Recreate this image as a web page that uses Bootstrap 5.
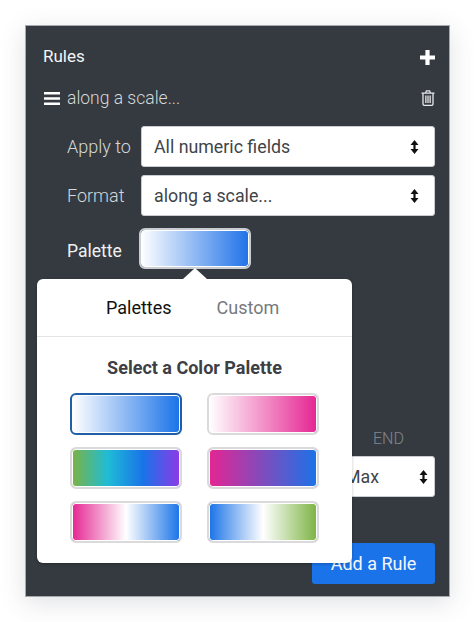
<!DOCTYPE html>
<html lang="en">
<head>
<meta charset="utf-8">
<title>Rules</title>
<link href="https://cdn.jsdelivr.net/npm/bootstrap@5.3.0/dist/css/bootstrap.min.css" rel="stylesheet">
<style>
html,body{height:622px;overflow:hidden;background:#fff;}
body{font-family:Roboto,"Liberation Sans",sans-serif;padding:25px 24px 25px 25px;}
.rule-panel{width:425px;height:572px;background:#343a40;border:1px solid #a6a9ad;box-shadow:0 6px 24px rgba(60,70,90,.16);padding:20px 14px 0 17px;color:#fff;font-weight:300;position:relative;}
.rule-head{height:22px;font-size:17px;font-weight:400;color:#f4f5f6;}
.rule-sub{margin-top:19px;height:22px;font-size:17.5px;color:#d5d8da;}
.menu-bars{width:16px;margin:1px 7px 0 1px;}
.rule-row{margin:17px 0 0 24px;}
.rule-row + .rule-row{margin-top:8px;}
.rule-label{width:74px;flex:none;font-size:18px;color:#d5d8da;}
.rule-select.form-select{height:41px;padding:2px 30px 0 12px;font-size:17.8px;font-weight:400;color:#3f4449;border:1px solid #c9ccd0;border-radius:3px;background-size:9px 14px;background-position:right 15px center;background-image:url("data:image/svg+xml,%3Csvg xmlns='http://www.w3.org/2000/svg' viewBox='0 0 9 14'%3E%3Cpath fill='%23111' d='M4.5 0 8.500 5H.5zM4.5 14 .5 9h8zM3.4 4h2.200v6H3.400z'/%3E%3C/svg%3E");}
.palette-row{margin:12px 0 0 24px;}
.palette-label{width:72px;flex:none;font-size:17.5px;font-weight:400;color:#f0f1f2;padding-top:5px;}
.palette-open{width:112px;height:41px;padding:0;border:2px solid #343a40;outline:2px solid #c9cdd1;outline-offset:-2px;border-radius:6px;background:linear-gradient(90deg,#fff 0,#1f72e8 100%);box-shadow:inset 0 0 0 1px #fff;}
.range-row{margin:161px 0 0 24px;}
.range-col{flex:1 1 0;}
.range-col + .range-col{flex:0 0 103px;}
.range-title{font-size:16px;color:#81868c;height:26px;line-height:18px;padding-left:41px;}
.range-col .rule-select.form-select{background-position:right 6px center;}
.add-rule.btn{display:block;margin:46px 0 0 auto;width:123px;height:41px;padding:0;background:#1a73e8;border:0;border-radius:3px;color:#f4f8fe;font-size:18px;font-weight:400;}
.palette-pop{position:absolute;left:11px;top:253px;width:315px;height:284px;background:#fff;border-radius:6px;color:#343a40;font-weight:400;box-shadow:0 1px 3px rgba(0,0,0,.25);}
.palette-pop::before{content:"";position:absolute;left:146px;top:-11px;border-left:12px solid transparent;border-right:12px solid transparent;border-bottom:11px solid #fff;}
.pop-tabs{height:57.5px;border-bottom:1px solid #e3e4e6;padding:0 0 0 69px;gap:45px;font-size:18px;}
.pop-tab{border:0;background:none;padding:0;color:#111;font-size:18px;}
.pop-tab-off{color:#77797c;}
.pop-title{margin:21px 0 0;font-size:18px;font-weight:700;color:#3c4045;text-align:center;line-height:20px;}
.swatch-grid{display:grid;grid-template-columns:112px 112px;column-gap:25px;row-gap:12px;justify-content:center;margin:15px 0 0 -1px;}
.swatch{display:block;height:42px;padding:0;border:2px solid #dadadd;border-radius:6px;box-shadow:inset 0 0 0 1px #fff;}
.swatch-on{border-color:#1f5fa8;}
.sw1{background:linear-gradient(90deg,#fff,#1a73e8);}
.sw2{background:linear-gradient(90deg,#fff,#e52592);}
.sw3{background:linear-gradient(90deg,#7cb342 0,#1fbcd6 33%,#1a73e8 66%,#8e3ae6 100%);}
.sw4{background:linear-gradient(90deg,#e52592,#1a73e8);}
.sw5{background:linear-gradient(90deg,#e52592,#fff 50%,#1a73e8);}
.sw6{background:linear-gradient(90deg,#1a73e8,#fff 50%,#7cb342);}
</style>
</head>
<body>
<div class="rule-panel">
  <div class="rule-head d-flex justify-content-between align-items-center">
    <span>Rules</span>
    <svg width="15" height="15" viewBox="0 0 15 15" aria-hidden="true"><path fill="#fff" d="M5.400 0h4.200v5.400H15v4.200H9.600V15H5.400V9.600H0V5.400h5.400z"/></svg>
  </div>
  <div class="rule-sub d-flex align-items-center">
    <svg class="menu-bars" height="13" viewBox="0 0 16 13" aria-hidden="true"><path fill="#fff" d="M0 0h16v2.600H0zM0 5.200h16v2.600H0zM0 10.400h16V13H0z"/></svg>
    <span>along a scale...</span>
    <svg class="ms-auto" width="14" height="16" viewBox="0 0 14 16" aria-hidden="true"><path fill="none" stroke="#e6e8ea" stroke-width="1.3" d="M.5 3.200h13M2 3.200V14a1.400 1.400 0 0 0 1.400 1.400h7.200A1.400 1.400 0 0 0 12 14V3.200M4.500 3.200l.9-2.400h3.200l.9 2.400"/><path fill="#e6e8ea" d="M4.200 5.600h1.300v7.400H4.200zM6.350 5.600h1.300v7.400H6.350zM8.500 5.600h1.300v7.400H8.500z"/></svg>
  </div>
  <div class="rule-row d-flex align-items-center">
    <span class="rule-label">Apply to</span>
    <select class="form-select rule-select"><option>All numeric fields</option></select>
  </div>
  <div class="rule-row d-flex align-items-center">
    <span class="rule-label">Format</span>
    <select class="form-select rule-select"><option>along a scale...</option></select>
  </div>
  <div class="palette-row d-flex align-items-center">
    <span class="palette-label">Palette</span>
    <button type="button" class="palette-open" aria-label="Palette"></button>
  </div>
  <div class="range-row d-flex">
    <div class="range-col"></div>
    <div class="range-col">
      <div class="range-title">END</div>
      <select class="form-select rule-select"><option>Max</option></select>
    </div>
  </div>
  <button type="button" class="btn add-rule">Add a Rule</button>

  <div class="palette-pop">
    <div class="pop-tabs d-flex align-items-center">
      <button type="button" class="pop-tab">Palettes</button>
      <button type="button" class="pop-tab pop-tab-off">Custom</button>
    </div>
    <p class="pop-title">Select a Color Palette</p>
    <div class="swatch-grid">
      <button type="button" class="swatch swatch-on sw1" aria-label="Blue"></button>
      <button type="button" class="swatch sw2" aria-label="Pink"></button>
      <button type="button" class="swatch sw3" aria-label="Green blue purple"></button>
      <button type="button" class="swatch sw4" aria-label="Pink blue"></button>
      <button type="button" class="swatch sw5" aria-label="Pink white blue"></button>
      <button type="button" class="swatch sw6" aria-label="Blue white green"></button>
    </div>
  </div>
</div>
</body>
</html>
